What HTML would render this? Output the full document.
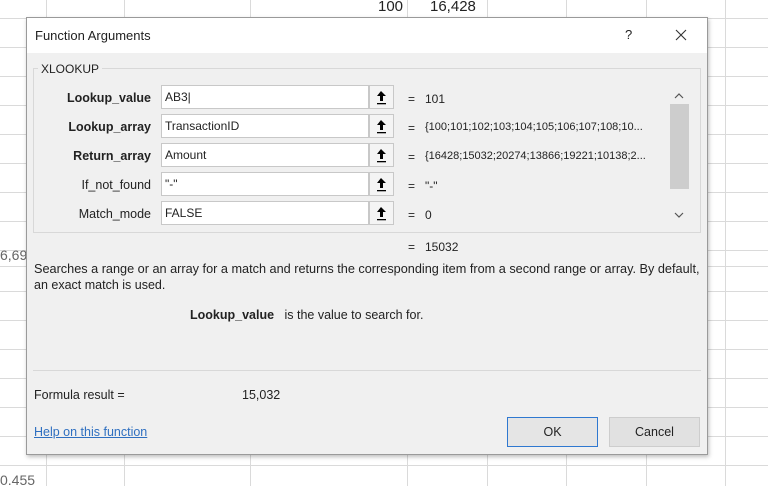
<!DOCTYPE html>
<html><head><style>
*{margin:0;padding:0;box-sizing:border-box}
body{width:768px;height:486px;overflow:hidden;background:#fff;font-family:"Liberation Sans",sans-serif;font-size:12px;color:#222;position:relative}
.a{position:absolute;white-space:nowrap}
.vl{position:absolute;top:0;height:486px;width:1px;background:#dadada}
.hl{position:absolute;left:0;width:768px;height:1px;background:#dadada}
#dlg{position:absolute;left:26px;top:17px;width:682px;height:438px;background:#f0f0f0;border:1px solid #9a9a9a;box-shadow:1px 2px 4px rgba(0,0,0,.25)}
#tb{position:absolute;left:0;top:0;width:680px;height:35px;background:#fff}
.lbl{position:absolute;width:124px;text-align:right;left:0;white-space:nowrap;font-size:12.5px}
.in{position:absolute;left:134px;width:208px;height:24px;background:#fff;border:1px solid #c8c8c8;padding:4px 3px;font-size:12px;white-space:nowrap}
.btn{position:absolute;left:342px;width:25px;height:24px;background:#f4f4f4;border:1px solid #c8c8c8}
.eq{position:absolute;left:381px;white-space:nowrap}
.val{position:absolute;left:398px;white-space:nowrap}
</style></head><body>
<div class="vl" style="left:46px"></div><div class="vl" style="left:124px"></div><div class="vl" style="left:250px"></div><div class="vl" style="left:407px"></div><div class="vl" style="left:487px"></div><div class="vl" style="left:566px"></div><div class="vl" style="left:646px"></div><div class="vl" style="left:725px"></div>
<div class="hl" style="top:18px"></div><div class="hl" style="top:47px"></div><div class="hl" style="top:76px"></div><div class="hl" style="top:105px"></div><div class="hl" style="top:134px"></div><div class="hl" style="top:163px"></div><div class="hl" style="top:192px"></div><div class="hl" style="top:221px"></div><div class="hl" style="top:250px"></div><div class="hl" style="top:266px"></div><div class="hl" style="top:291px"></div><div class="hl" style="top:320px"></div><div class="hl" style="top:349px"></div><div class="hl" style="top:378px"></div><div class="hl" style="top:407px"></div><div class="hl" style="top:436px"></div><div class="hl" style="top:465px"></div>
<div class="a" style="left:378px;top:-2px;font-size:15px">100</div>
<div class="a" style="left:430px;top:-2px;font-size:15px">16,428</div>
<div class="a" style="left:0;top:247px;font-size:14px;color:#666">6,69</div>
<div class="a" style="left:0;top:472px;font-size:14px;color:#666">0.455</div>
<div id="dlg">
<div id="tb">
<div class="a" style="left:8px;top:10px;font-size:13px">Function Arguments</div>
<div class="a" style="left:598px;top:9px;font-size:13px">?</div>
<svg class="a" style="left:648px;top:11px" width="12" height="12"><path d="M1 1L11 11M11 1L1 11" stroke="#333" stroke-width="1.1"/></svg>
</div>
<div class="a" style="left:6px;top:50px;width:668px;height:165px;border:1px solid #d8d8d8"></div>
<div class="a" style="left:11px;top:44px;background:#f0f0f0;padding:0 3px">XLOOKUP</div>
<div style="position:absolute;left:0;top:67px">
<div class="lbl" style="top:6px;font-weight:bold">Lookup_value</div><div class="in" style="top:0">AB3|</div><div class="btn" style="top:0"></div><div class="eq" style="top:7px">=</div><div class="val" style="top:7px">101</div>
<div class="lbl" style="top:35px;font-weight:bold">Lookup_array</div><div class="in" style="top:29px">TransactionID</div><div class="btn" style="top:29px"></div><div class="eq" style="top:36px">=</div><div class="val" style="top:36px;font-size:11px">{100;101;102;103;104;105;106;107;108;10...</div>
<div class="lbl" style="top:64px;font-weight:bold">Return_array</div><div class="in" style="top:58px">Amount</div><div class="btn" style="top:58px"></div><div class="eq" style="top:65px">=</div><div class="val" style="top:65px;font-size:11px">{16428;15032;20274;13866;19221;10138;2...</div>
<div class="lbl" style="top:93px">If_not_found</div><div class="in" style="top:87px">"-"</div><div class="btn" style="top:87px"></div><div class="eq" style="top:94px">=</div><div class="val" style="top:94px">"-"</div>
<div class="lbl" style="top:122px">Match_mode</div><div class="in" style="top:116px">FALSE</div><div class="btn" style="top:116px"></div><div class="eq" style="top:123px">=</div><div class="val" style="top:123px">0</div>
</div>
<svg class="a" style="left:346px;top:70px" width="18" height="140">
<g fill="#000"><path d="M8 3L4 8H7V13H10V8H13Z"/><rect x="4" y="15" width="9" height="1.3"/></g>
<g fill="#000" transform="translate(0,29)"><path d="M8 3L4 8H7V13H10V8H13Z"/><rect x="4" y="15" width="9" height="1.3"/></g>
<g fill="#000" transform="translate(0,58)"><path d="M8 3L4 8H7V13H10V8H13Z"/><rect x="4" y="15" width="9" height="1.3"/></g>
<g fill="#000" transform="translate(0,87)"><path d="M8 3L4 8H7V13H10V8H13Z"/><rect x="4" y="15" width="9" height="1.3"/></g>
<g fill="#000" transform="translate(0,116)"><path d="M8 3L4 8H7V13H10V8H13Z"/><rect x="4" y="15" width="9" height="1.3"/></g>
</svg>
<div class="a" style="left:643px;top:86px;width:19px;height:85px;background:#cdcdcd"></div>
<svg class="a" style="left:646px;top:74px" width="12" height="8"><path d="M2 6L6 2L10 6" stroke="#555" fill="none" stroke-width="1.2"/></svg>
<svg class="a" style="left:646px;top:193px" width="12" height="8"><path d="M2 2L6 6L10 2" stroke="#555" fill="none" stroke-width="1.2"/></svg>
<div class="a" style="left:381px;top:222px">=</div><div class="a" style="left:398px;top:222px">15032</div>
<div class="a" style="left:7px;top:244px;font-size:12.7px">Searches a range or an array for a match and returns the corresponding item from a second range or array. By default,</div>
<div class="a" style="left:7px;top:260px;font-size:12.5px">an exact match is used.</div>
<div class="a" style="left:163px;top:290px;font-size:12.5px"><b>Lookup_value</b>&nbsp;&nbsp;&nbsp;is the value to search for.</div>
<div class="a" style="left:6px;top:352px;width:668px;height:1px;background:#d8d8d8"></div>
<div class="a" style="left:7px;top:370px;font-size:12.5px">Formula result =</div>
<div class="a" style="left:215px;top:370px;font-size:12.5px">15,032</div>
<div class="a" style="left:7px;top:407px;color:#2e6fc0;text-decoration:underline;font-size:12.5px">Help on this function</div>
<div class="a" style="left:480px;top:399px;width:91px;height:30px;border:1px solid #2f78d0;background:#e5e5e5;text-align:center;line-height:28px;font-size:12.5px">OK</div>
<div class="a" style="left:582px;top:399px;width:91px;height:30px;border:1px solid #cdcdcd;background:#e1e1e1;text-align:center;line-height:28px;font-size:12.5px">Cancel</div>
</div>
</body></html>
